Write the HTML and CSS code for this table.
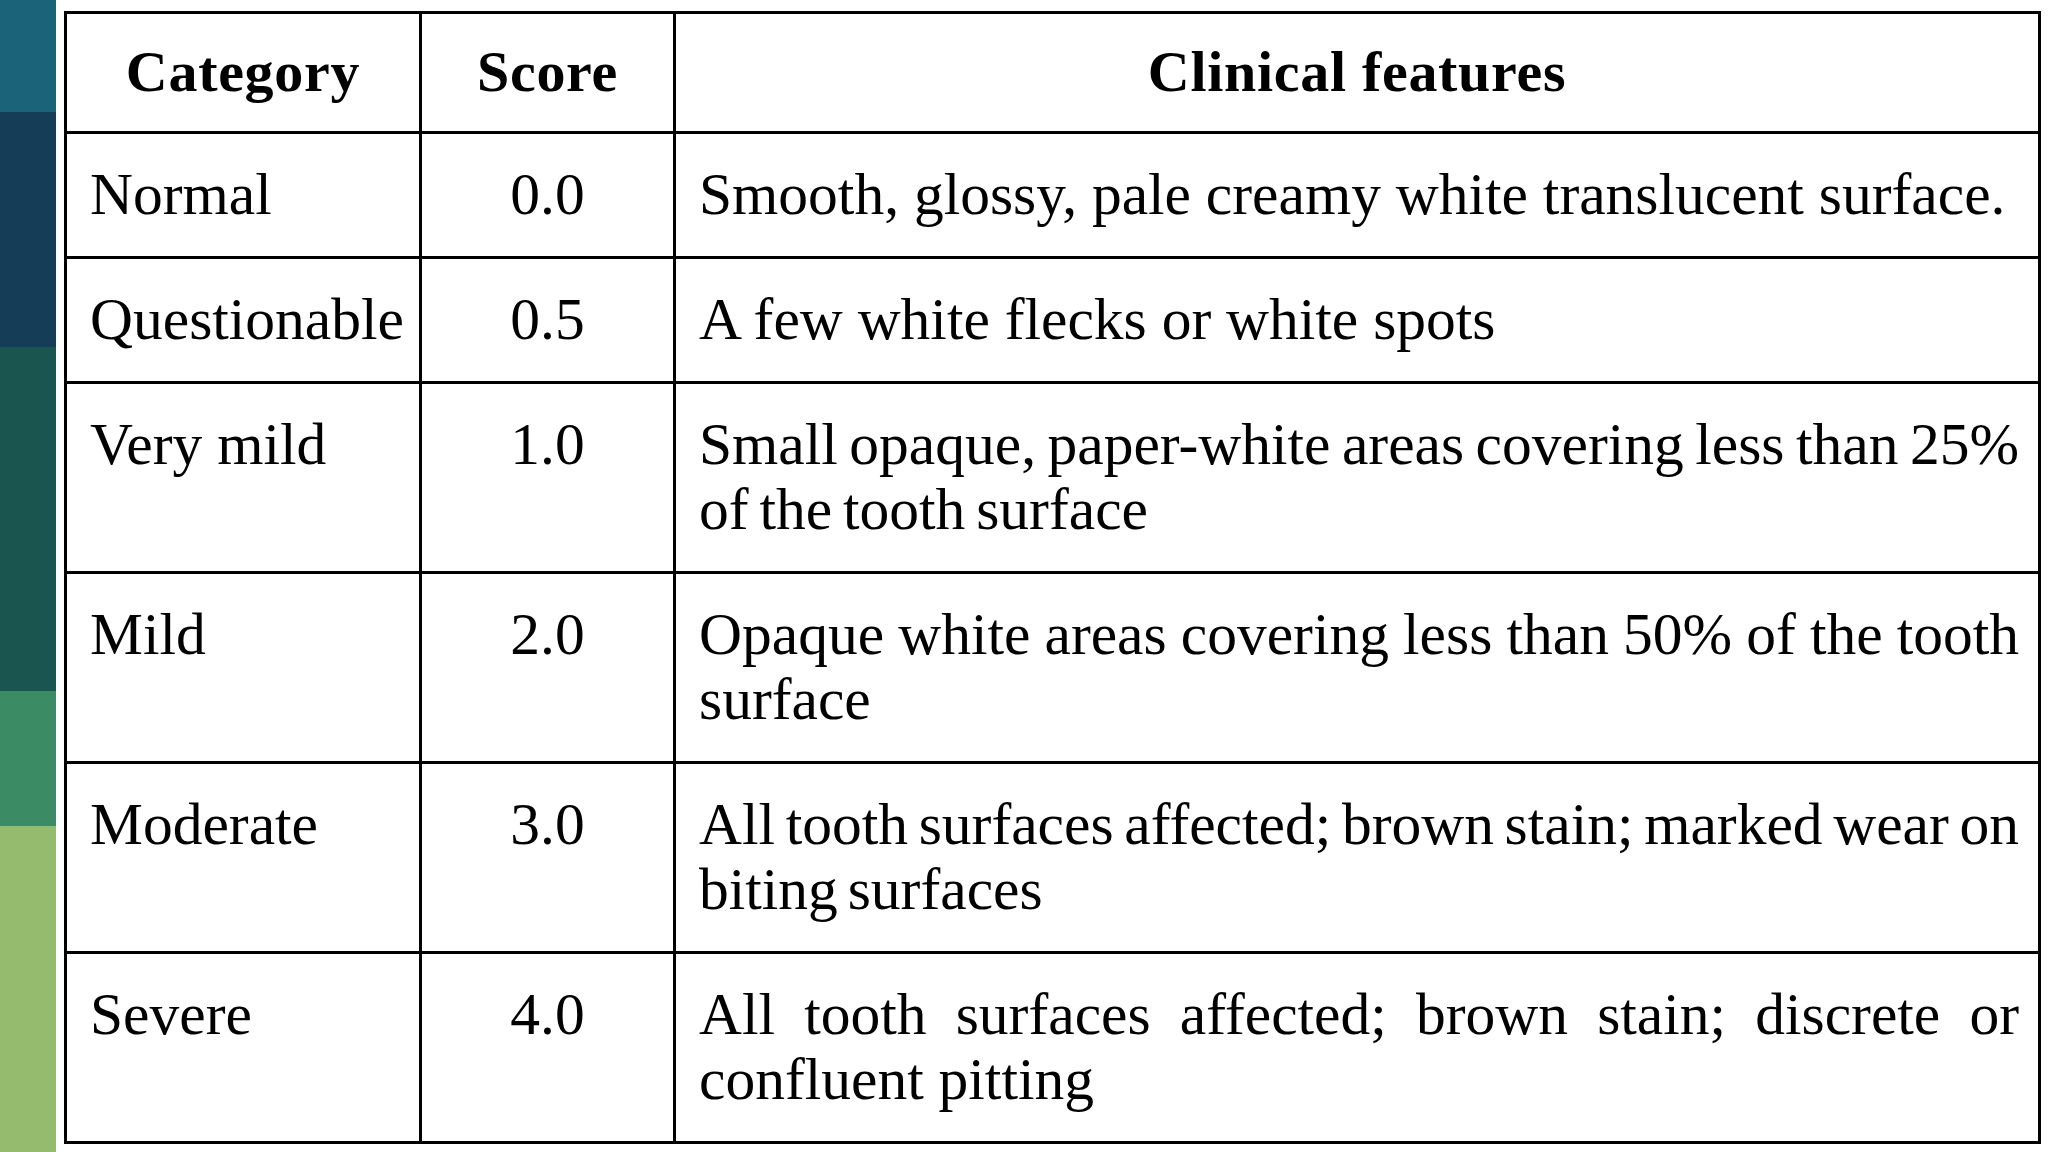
FILE: index.html
```html
<!DOCTYPE html>
<html lang="en">
<head>
<meta charset="utf-8">
<title>Fluorosis index</title>
<link rel="stylesheet" href="styles.css">
</head>
<body>
<div class="page">
  <div class="stripe">
    <div class="band band-teal"></div>
    <div class="band band-navy"></div>
    <div class="band band-forest"></div>
    <div class="band band-green"></div>
    <div class="band band-lime"></div>
  </div>
  <div class="content">
    <table class="grid">
      <colgroup>
        <col class="c-cat">
        <col class="c-score">
        <col class="c-feat">
      </colgroup>
      <thead>
        <tr>
          <th>Category</th>
          <th>Score</th>
          <th>Clinical features</th>
        </tr>
      </thead>
      <tbody>
        <tr>
          <td class="cat">Normal</td>
          <td class="score">0.0</td>
          <td class="feat">Smooth, glossy, pale creamy white translucent surface.</td>
        </tr>
        <tr>
          <td class="cat">Questionable</td>
          <td class="score">0.5</td>
          <td class="feat">A few white flecks or white spots</td>
        </tr>
        <tr>
          <td class="cat">Very mild</td>
          <td class="score">1.0</td>
          <td class="feat tight-3">Small opaque, paper-white areas covering less than 25% of the tooth surface</td>
        </tr>
        <tr>
          <td class="cat">Mild</td>
          <td class="score">2.0</td>
          <td class="feat tight-1">Opaque white areas covering less than 50% of the tooth surface</td>
        </tr>
        <tr>
          <td class="cat">Moderate</td>
          <td class="score">3.0</td>
          <td class="feat tight-4">All tooth surfaces affected; brown stain; marked wear on biting surfaces</td>
        </tr>
        <tr>
          <td class="cat">Severe</td>
          <td class="score">4.0</td>
          <td class="feat">All tooth surfaces affected; brown stain; discrete or confluent pitting</td>
        </tr>
      </tbody>
    </table>
  </div>
</div>
</body>
</html>
```

FILE: styles.css
```css
html, body {
  margin: 0;
  padding: 0;
  background: #ffffff;
}

.page {
  display: flex;
  width: 2048px;
  height: 1152px;
  overflow: hidden;
  background: #ffffff;
}

.stripe {
  width: 56px;
  flex: 0 0 56px;
  display: flex;
  flex-direction: column;
}

.band { flex: 0 0 auto; }
.band-teal   { height: 112px; background: #1b6379; }
.band-navy   { height: 235px; background: #163d58; }
.band-forest { height: 344px; background: #1a5550; }
.band-green  { height: 135px; background: #3b8b64; }
.band-lime   { flex: 1 1 auto; background: #95bb6f; }

.content {
  flex: 1 1 auto;
  padding: 11px 0 0 8px;
}

.grid {
  border-collapse: collapse;
  table-layout: fixed;
  width: 1977px;
  color: #000000;
}

.c-cat   { width: 355px; }
.c-score { width: 254px; }
.c-feat  { width: auto; }

.grid th,
.grid td {
  border: 3px solid #000000;
  vertical-align: top;
  font-family: "Liberation Serif", "Noto Serif", "DejaVu Serif", "Times New Roman", serif;
}

.grid th {
  font-size: 58px;
  font-weight: bold;
  line-height: 65px;
  letter-spacing: 0.7px;
  text-align: center;
  padding: 25px 10px 27px;
}

.grid td {
  font-size: 59.5px;
  line-height: 65px;
  padding: 28px 19px 29px 23px;
}

.grid td.score {
  text-align: center;
  padding-left: 10px;
  padding-right: 10px;
}

.grid td.feat {
  text-align: justify;
}

.tight-1 { word-spacing: -2px; }
.tight-3 { word-spacing: -4px; }
.tight-4 { word-spacing: -5px; }
```
